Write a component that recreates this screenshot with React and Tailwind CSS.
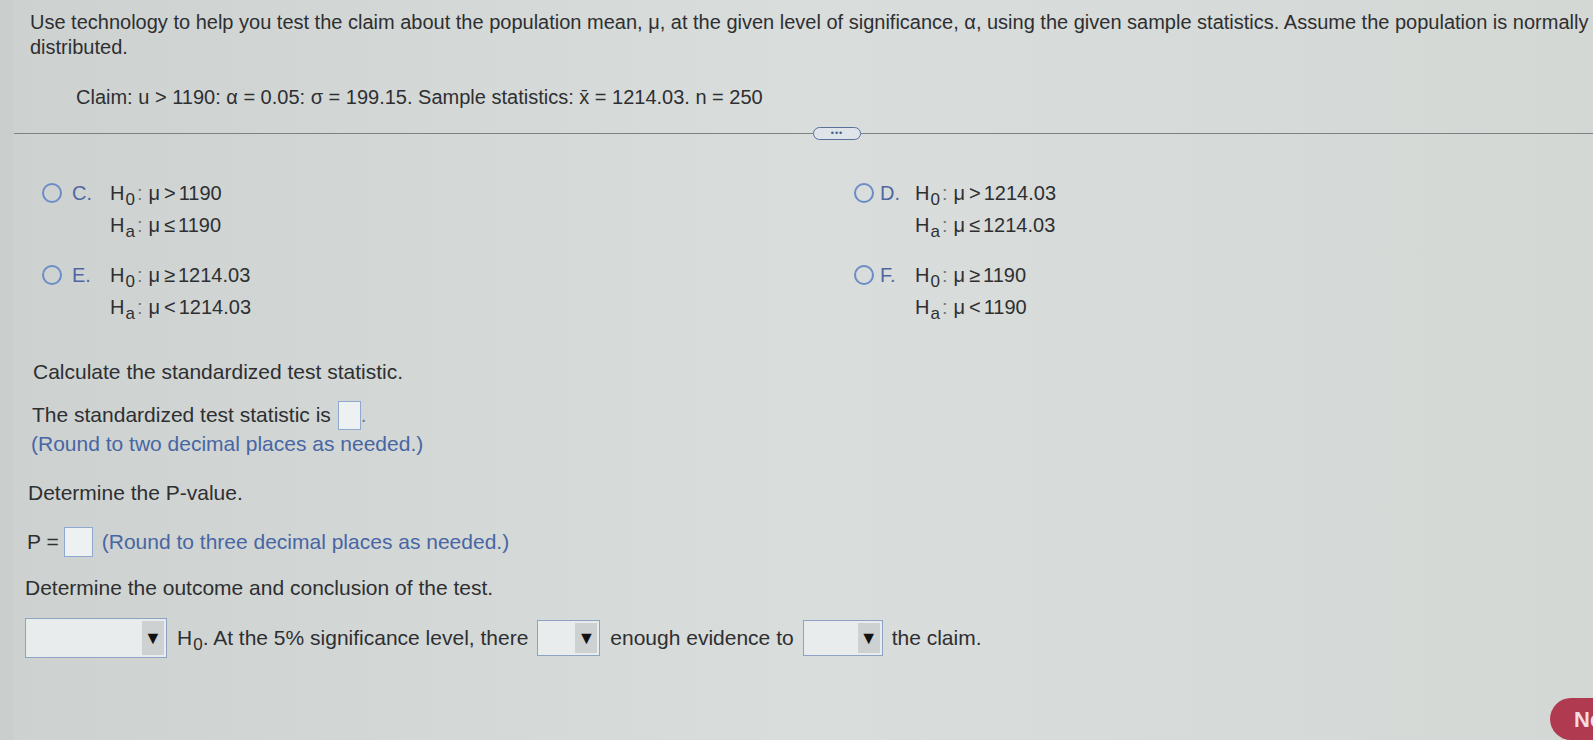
import React from 'react'

const ink = 'text-[#2e2f31]'

function Radio() {
  return <span className="inline-block w-[20px] h-[20px] rounded-full border-2 border-[#6b8cc6] shrink-0" />
}

function Hyp({ sub, rel, val }) {
  return (
    <div className="flex items-baseline">
      <span>H</span>
      <sub className="text-[17px] relative top-[5px] ml-[1px]">{sub}</sub>
      <span className="ml-[2px] text-[#777]">:</span>
      <span className="ml-[6px]">μ</span>
      <span className="ml-[4px]">{rel}</span>
      <span className="ml-[3px]">{val}</span>
    </div>
  )
}

function Option({ letter, h0, ha, right }) {
  return (
    <div className="flex items-start">
      <div className="flex items-center h-[32px]">
        <Radio />
        <span className={right ? 'ml-[6px] w-[35px] text-[#4f67a0]' : 'ml-[10px] w-[38px] text-[#4f67a0]'}>{letter}</span>
      </div>
      <div className="flex flex-col leading-[32px]">
        <Hyp sub="0" rel={h0[0]} val={h0[1]} />
        <Hyp sub="a" rel={ha[0]} val={ha[1]} />
      </div>
    </div>
  )
}

function AnswerBox({ className }) {
  return <span className={'inline-block border border-[#8fa8cf] bg-[#eef1f1] ' + className} />
}

function Dropdown({ className }) {
  return (
    <span className={'inline-flex border border-[#8ea3c4] bg-[#e9ecec] ' + className}>
      <span className="flex-1" />
      <span className="w-[22px] my-[2px] mr-[2px] bg-[#cdd1d1] flex items-center justify-center text-[18px] text-[#111]">▼</span>
    </span>
  )
}

export default function App() {
  return (
    <div
      className={'relative w-full h-[740px] overflow-hidden bg-gradient-to-r from-[#cdd2d1] via-[#d9dddc] to-[#d4d8d5] text-[20px] ' + ink}
      style={{ fontFamily: '"Liberation Sans", Arial, sans-serif' }}
    >
      <div className="h-full border-l-[14px] border-[#cacfce]">
        <div className="pt-[10px] pl-[16px] pr-[4px] leading-[25px] whitespace-nowrap">
          <p>Use technology to help you test the claim about the population mean, μ, at the given level of significance, α, using the given sample statistics. Assume the population is normally</p>
          <p>distributed.</p>
        </div>

        <p className="mt-[25px] pl-[62px] leading-[25px]">
          Claim: u &gt; 1190: α = 0.05: σ = 199.15. Sample statistics: x̄ = 1214.03. n = 250
        </p>

        <div className="mt-[17px] flex items-center">
          <div className="h-[1px] w-[799px] shrink-0 bg-[#7c8383]" />
          <span className="h-[13px] w-[48px] shrink-0 rounded-full border border-[#58709a] bg-[#dfe4ea] flex items-center justify-center text-[9px] leading-none text-[#4a5f86] tracking-[1px]">•••</span>
          <div className="h-[1px] flex-1 bg-[#7c8383]" />
        </div>

        <div className="mt-[37px] grid grid-cols-[812px_1fr] pl-[28px] gap-y-[18px]">
          <Option letter="C." h0={['>', '1190']} ha={['≤', '1190']} />
          <Option right letter="D." h0={['>', '1214.03']} ha={['≤', '1214.03']} />
          <Option letter="E." h0={['≥', '1214.03']} ha={['<', '1214.03']} />
          <Option right letter="F." h0={['≥', '1190']} ha={['<', '1190']} />
        </div>

        <div className="text-[21px]">
          <p className="mt-[36px] pl-[19px] leading-[25px]">Calculate the standardized test statistic.</p>

          <div className="mt-[16px] pl-[18px] flex items-center h-[30px]">
            <span>The standardized test statistic is</span>
            <AnswerBox className="ml-[7px] w-[23px] h-[29px]" />
            <span className="text-[#777]">.</span>
          </div>
          <p className="pl-[17px] leading-[28px] text-[#4866a3]">(Round to two decimal places as needed.)</p>

          <p className="mt-[22px] pl-[14px] leading-[25px]">Determine the P-value.</p>

          <div className="mt-[22px] pl-[13px] flex items-center h-[30px]">
            <span>P =</span>
            <AnswerBox className="ml-[5px] w-[29px] h-[30px]" />
            <span className="ml-[9px] text-[#4866a3]">(Round to three decimal places as needed.)</span>
          </div>

          <p className="mt-[18px] pl-[11px] leading-[25px]">Determine the outcome and conclusion of the test.</p>

          <div className="mt-[18px] pl-[11px] flex items-center">
            <Dropdown className="w-[142px] h-[40px]" />
            <span className="ml-[10px] flex items-baseline">
              H<sub className="text-[17px] relative top-[5px] ml-[1px]">0</sub>. At the 5% significance level, there
            </span>
            <Dropdown className="ml-[9px] w-[63px] h-[36px]" />
            <span className="ml-[10px]">enough evidence to</span>
            <Dropdown className="ml-[9px] w-[80px] h-[36px]" />
            <span className="ml-[9px]">the claim.</span>
          </div>
        </div>
      </div>

      <button className="absolute left-[1550px] top-[698px] w-[110px] h-[42px] rounded-l-full bg-[#b03a4f] text-[#f3dde2] font-bold text-[22px] text-left pl-[24px]">
        Next
      </button>
    </div>
  )
}
